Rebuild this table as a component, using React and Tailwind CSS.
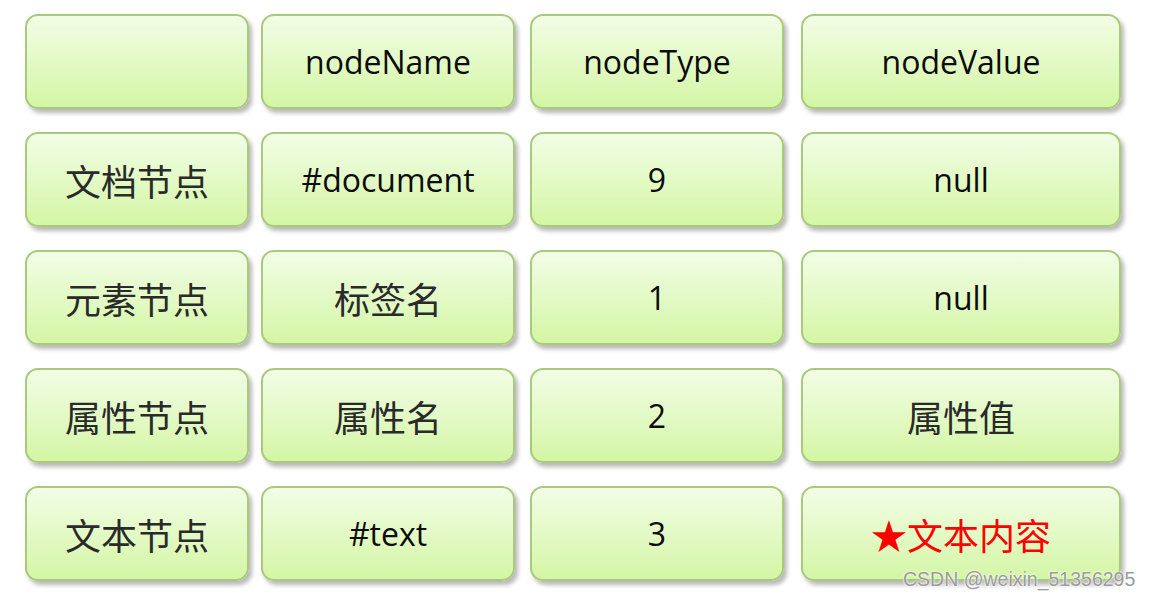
import React from "react";

const cols = [
  "w-[224px] ml-[25px]",
  "w-[254px] ml-[12px]",
  "w-[254px] ml-[15px]",
  "w-[320px] ml-[17px]",
];

const rows = [
  ["", "nodeName", "nodeType", "nodeValue"],
  ["文档节点", "#document", "9", "null"],
  ["元素节点", "标签名", "1", "null"],
  ["属性节点", "属性名", "2", "属性值"],
  ["文本节点", "#text", "3", "RED"],
];

const isCJK = (s) => /[\u4e00-\u9fff]/.test(s);

function Cell({ cls, text }) {
  let content;
  if (text === "RED") {
    content = (
      <span className="text-[36px] text-[#ff0000] [font-family:'Noto_Sans_CJK_SC',sans-serif] leading-none">
        ★文本内容
      </span>
    );
  } else if (isCJK(text)) {
    content = (
      <span className="text-[36px] text-[#2a2a2a] [font-family:'Noto_Sans_CJK_SC',sans-serif] leading-none">
        {text}
      </span>
    );
  } else {
    content = (
      <span className="text-[32px] text-[#0c0c0c] [font-family:'Open_Sans',sans-serif] leading-none">
        {text}
      </span>
    );
  }
  return (
    <div
      className={`${cls} h-[95px] shrink-0 rounded-[13px] border-2 border-[#a9c97c] bg-gradient-to-b from-[#f2fde6] to-[#d4f6a4] shadow-[3px_4px_4px_rgba(0,0,0,0.28)] flex items-center justify-center`}
    >
      {content}
    </div>
  );
}

export default function App() {
  return (
    <div className="relative w-[1150px] h-[599px] bg-white overflow-hidden">
      <div className="flex flex-col gap-[23px] pt-[14px]">
        {rows.map((r, i) => (
          <div key={i} className="flex">
            {r.map((t, j) => (
              <Cell key={j} cls={cols[j]} text={t} />
            ))}
          </div>
        ))}
      </div>
      <div className="absolute left-[903px] top-[570px] text-[19.5px] text-[#9a9a9a] [font-family:'Liberation_Sans',sans-serif] leading-none [text-shadow:0_0_2px_#fff,0_0_2px_#fff]">
        CSDN @weixin_51356295
      </div>
    </div>
  );
}
